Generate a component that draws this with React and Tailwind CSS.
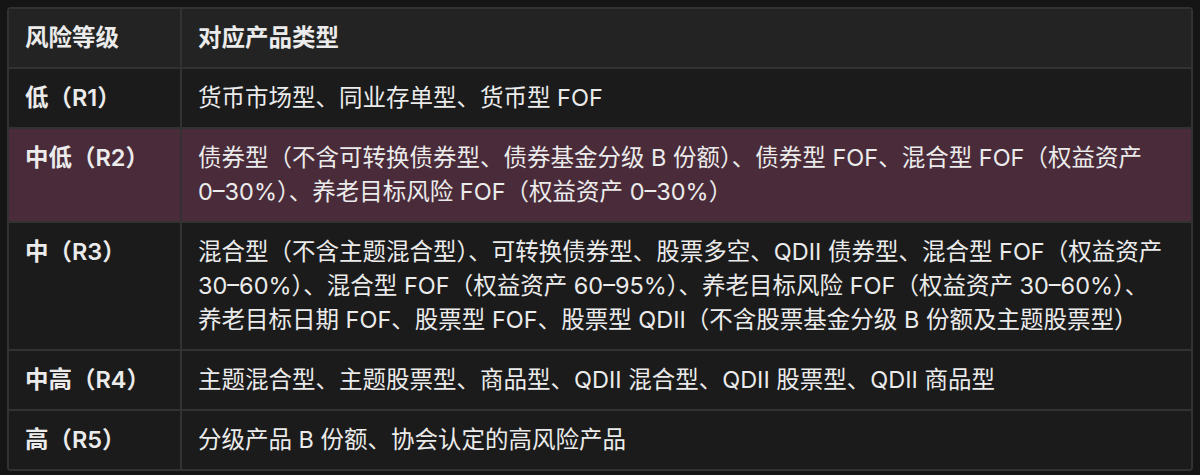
const rows = [
    { level: '低（R1）', lines: ['货币市场型、同业存单型、货币型 FOF'] },
    { level: '中低（R2）', highlight: true, lines: ['债券型（不含可转换债券型、债券基金分级 B 份额）、债券型 FOF、混合型 FOF（权益资产', '0–30%）、养老目标风险 FOF（权益资产 0–30%）'] },
    { level: '中（R3）', lines: ['混合型（不含主题混合型）、可转换债券型、股票多空、QDII 债券型、混合型 FOF（权益资产', '30–60%）、混合型 FOF（权益资产 60–95%）、养老目标风险 FOF（权益资产 30–60%）、', '养老目标日期 FOF、股票型 FOF、股票型 QDII（不含股票基金分级 B 份额及主题股票型）'] },
    { level: '中高（R4）', lines: ['主题混合型、主题股票型、商品型、QDII 混合型、QDII 股票型、QDII 商品型'] },
    { level: '高（R5）', lines: ['分级产品 B 份额、协会认定的高风险产品'] },
];

export default function App() {
    return (
        <div className="min-h-[475px] w-[1200px] bg-[#151515] p-[7px] font-['Inter','Noto_Sans_CJK_SC',sans-serif] text-[23.5px] leading-[34px] text-[#ebebeb]">
            <div className="overflow-hidden rounded-[4px] border-2 border-[#323232]">
                <table className="w-full border-collapse">
                    <thead>
                        <tr className="bg-[#232323]">
                            <th className="w-[172px] border-r-2 border-[#323232] px-[16px] py-[12px] text-left font-semibold">风险等级</th>
                            <th className="px-[16px] py-[12px] text-left font-semibold">对应产品类型</th>
                        </tr>
                    </thead>
                    <tbody>
                        {rows.map((row) => (
                            <tr className={`border-t-2 border-[#323232] ${row.highlight ? 'bg-[#4a2b3a]' : 'bg-[#1b1b1b]'}`} key={row.level}>
                                <td className="border-r-2 border-[#323232] px-[16px] py-[12px] align-top font-semibold">{row.level}</td>
                                <td className="px-[16px] py-[12px] align-top">
                                    {row.lines.map((line) => <div className="whitespace-nowrap" key={line}>{line}</div>)}
                                </td>
                            </tr>
                        ))}
                    </tbody>
                </table>
            </div>
        </div>
    );
}
